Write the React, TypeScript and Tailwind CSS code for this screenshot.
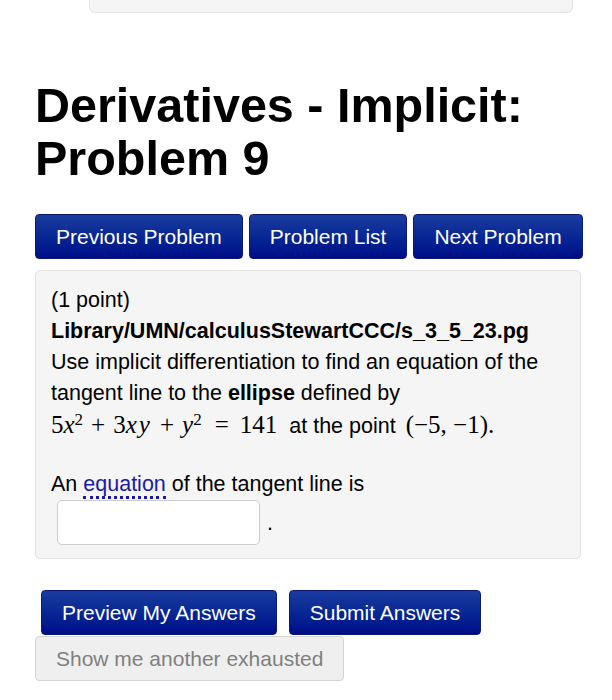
import React from 'react';

function NavButton({ label }: { label: string }) {
  return (
    <button className="h-[45px] shrink-0 whitespace-nowrap rounded-[4px] border border-[#0b1a6e] bg-gradient-to-b from-[#1a3b9f] to-[#000a88] px-[20px] text-[21px] text-white">
      {label}
    </button>
  );
}

const serif = "[font-family:'Liberation_Serif','Times_New_Roman',serif]";

export default function App() {
  return (
    <div className="min-h-[700px] bg-white pl-[35px] pr-[31px] text-black [font-family:'Liberation_Sans',Arial,sans-serif]">
      {/* cut-off well from the previous section */}
      <div className="ml-[54px] mr-[8px] h-[13px] rounded-b-[6px] border border-t-0 border-[#e3e3e3] bg-[#f5f5f5]" />

      <h1 className="mt-[66px] text-[48.5px] font-bold leading-[53px]">
        Derivatives - Implicit:
        <br />
        Problem 9
      </h1>

      <div className="mt-[29px] flex gap-[6px]">
        <NavButton label="Previous Problem" />
        <NavButton label="Problem List" />
        <NavButton label="Next Problem" />
      </div>

      <div className="mt-[11px] rounded-[5px] border border-[#e3e3e3] bg-[#f5f5f5] px-[15px] pb-[13px] pt-[14px] text-[21.5px] leading-[31px]">
        <div>(1 point)</div>
        <div className="font-bold">Library/UMN/calculusStewartCCC/s_3_5_23.pg</div>
        <div className="whitespace-nowrap">Use implicit differentiation to find an equation of the</div>
        <div className="whitespace-nowrap">
          tangent line to the <span className="font-bold">ellipse</span> defined by
        </div>
        <div className="flex items-baseline whitespace-nowrap">
          <span className={`text-[25px] ${serif}`}>
            5<i>x</i>
            <sup className="text-[17px]">2</sup>
            <span className="mx-[8px]">+</span>3<i className="tracking-[2px]">xy</i>
            <span className="mx-[8px]">+</span>
            <i>y</i>
            <sup className="text-[17px]">2</sup>
            <span className="ml-[13px] mr-[11px]">=</span>141
          </span>
          <span className="ml-[12px]">at the point</span>
          <span className={`ml-[10px] text-[25px] ${serif}`}>(−5, −1).</span>
        </div>
        <div className="h-[27px]" />
        <div>
          An{' '}
          <span className="border-b-[3px] border-dotted border-[#1a1aa6] text-[#1a1aa6]">equation</span>{' '}
          of the tangent line is
        </div>
        <div className="flex items-end pl-[6px]">
          <div className="h-[45px] w-[203px] rounded-[5px] border border-[#cccccc] bg-white" />
          <span className="mb-[6px] ml-[7px]">.</span>
        </div>
      </div>

      <div className="mt-[31px] flex gap-[12px] pl-[6px]">
        <NavButton label="Preview My Answers" />
        <NavButton label="Submit Answers" />
      </div>
      <button className="mt-px h-[45px] whitespace-nowrap rounded-[4px] border border-[#d4d4d4] bg-[#efefef] px-[20px] text-[21px] text-[#7f7f7f]">
        Show me another exhausted
      </button>
    </div>
  );
}
